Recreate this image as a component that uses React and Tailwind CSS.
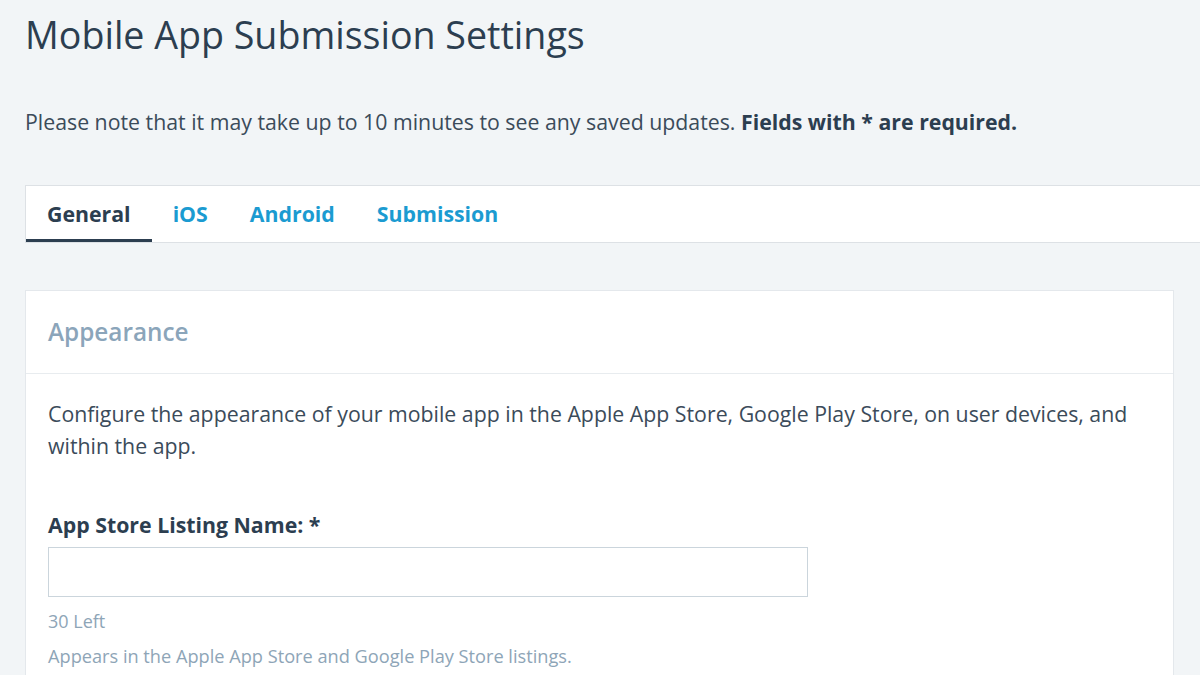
export default function App() {
  return (
    <div className="min-h-[675px] w-full overflow-hidden bg-[#f2f5f7] pl-[25px] text-[#34495a]" style={{ fontFamily: '"Open Sans", "Noto Sans", sans-serif' }}>
      <h1 className="pt-[13px] text-[37.6px] leading-[44px] font-normal text-[#2c3e50] whitespace-nowrap">Mobile App Submission Settings</h1>
      <p className="mt-[51px] text-[21.3px] leading-[28px] text-[#3b4b5a] whitespace-nowrap">
        Please note that it may take up to 10 minutes to see any saved updates. <span className="font-bold text-[#2c3e50]">Fields with * are required.</span>
      </p>
      <div className="mt-[49px] flex h-[58px] w-[1200px] border border-r-0 border-[#dde1e5] bg-white">
        <div className="flex h-[56px] items-center border-b-[3px] border-[#2c3e50] px-[21px] pt-[3px] text-[21.3px] font-bold text-[#2c3e50]">General</div>
        <div className="flex h-[56px] items-center px-[21px] text-[21.3px] font-bold text-[#1b9bd1]">iOS</div>
        <div className="flex h-[56px] items-center px-[21px] text-[21.3px] font-bold text-[#1b9bd1]">Android</div>
        <div className="flex h-[56px] items-center px-[21px] text-[21.3px] font-bold text-[#1b9bd1]">Submission</div>
      </div>
      <div className="mt-[47px] w-[1149px] border border-[#e4e8ec] bg-white">
        <div className="flex h-[83px] items-center border-b border-[#e8ecef] px-[22px] text-[24.3px] font-semibold text-[#8ba5ba]">Appearance</div>
        <div className="px-[22px] pt-[24px] pb-[40px]">
          <p className="text-[21.3px] leading-[32px] text-[#3b4b5a]">
            Configure the appearance of your mobile app in the Apple App Store, Google Play Store, on user devices, and within the app.
          </p>
          <div className="mt-[49px] text-[21.3px] leading-[28px] font-bold text-[#2c3e50]">App Store Listing Name: *</div>
          <input type="text" className="mt-[8px] block h-[50px] w-[760px] border border-[#cbd5dc] bg-white px-3 outline-none" />
          <div className="mt-[12px] text-[18px] leading-[24px] text-[#8ea5b7]">30 Left</div>
          <div className="mt-[11px] text-[18.2px] leading-[24px] text-[#8ea5b7]">Appears in the Apple App Store and Google Play Store listings.</div>
        </div>
      </div>
    </div>
  );
}
